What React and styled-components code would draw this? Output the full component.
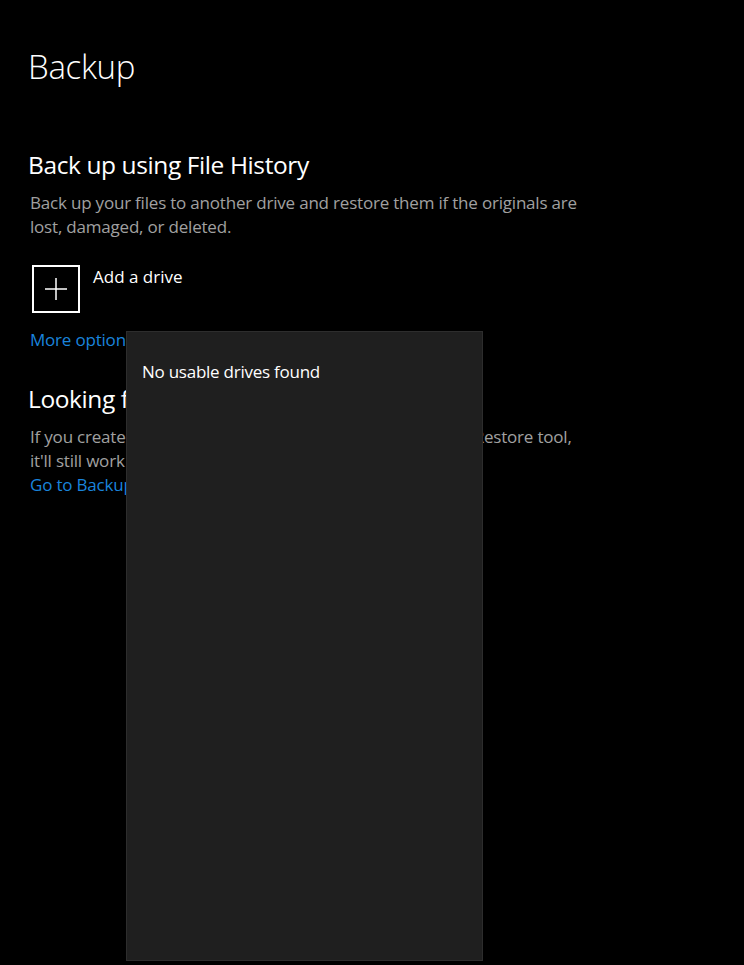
import React from 'react';
import styled, {createGlobalStyle} from 'styled-components';

const GlobalStyle = createGlobalStyle`
  html, body {
    margin: 0;
    padding: 0;
    background: #000;
  }
  body {
    font-family: "Open Sans", "Noto Sans", sans-serif;
    color: #fff;
  }
`;

const Page = styled.div`
  position: relative;
  width: 744px;
  height: 965px;
  background: #000;
  overflow: hidden;
  padding: 44px 0 0 28px;
  box-sizing: border-box;
`;

const Title = styled.h1`
  margin: 0;
  font-size: 33px;
  font-weight: 300;
  line-height: 46px;
  letter-spacing: -0.3px;
`;

const Section = styled.section`
  margin-top: ${props => props.top}px;
  width: 560px;
`;

const Heading = styled.h2`
  margin: 0;
  font-size: 24.5px;
  font-weight: 400;
  line-height: 32px;
  letter-spacing: -0.4px;
`;

const Body = styled.p`
  margin: 10px 0 0 2px;
  font-size: 17px;
  line-height: 24px;
  color: #a0a0a0;
  letter-spacing: -0.2px;
`;

const Link = styled.a`
  display: block;
  margin-left: 2px;
  font-size: 17px;
  line-height: 24px;
  color: #1a84dc;
  text-decoration: none;
  letter-spacing: -0.2px;
`;

const AddRow = styled.div`
  display: flex;
  align-items: flex-start;
  gap: 13px;
  margin: 26px 0 0 4px;
`;

const PlusBox = styled.div`
  width: 48px;
  height: 48px;
  box-sizing: border-box;
  border: 2px solid #fff;
  display: flex;
  align-items: center;
  justify-content: center;
`;

const AddLabel = styled.span`
  font-size: 17px;
  line-height: 24px;
  letter-spacing: 0;
  color: #fff;
`;

const MoreLink = styled(Link)`
  margin-top: 15px;
`;

const Flyout = styled.div`
  position: absolute;
  left: 126px;
  top: 331px;
  width: 357px;
  height: 630px;
  box-sizing: border-box;
  background: #1f1f1f;
  border: 1px solid #2d2d2d;
  padding: 28px 0 0 15px;
`;

const FlyoutText = styled.div`
  font-size: 17px;
  line-height: 24px;
  letter-spacing: -0.25px;
  color: #fff;
`;

const Plus = () => (
  <svg width="22" height="22" viewBox="0 0 22 22">
    <path d="M11 0v22M0 11h22" stroke="#fff" strokeWidth="1.5"/>
  </svg>
);

export default function App() {
  return (
    <>
      <GlobalStyle/>
      <Page>
        <Title>Backup</Title>
        <Section top={59}>
          <Heading>Back up using File History</Heading>
          <Body>Back up your files to another drive and restore them if the originals are lost, damaged, or deleted.</Body>
          <AddRow>
            <PlusBox><Plus/></PlusBox>
            <AddLabel>Add a drive</AddLabel>
          </AddRow>
          <MoreLink href="#">More options</MoreLink>
        </Section>
        <Section top={31}>
          <Heading>Looking for an older backup?</Heading>
          <Body>If you created a backup using the Windows 7 Backup and Restore tool, it'll still work in Windows 10.</Body>
          <Link href="#">Go to Backup and Restore (Windows 7)</Link>
        </Section>
        <Flyout>
          <FlyoutText>No usable drives found</FlyoutText>
        </Flyout>
      </Page>
    </>
  );
}
